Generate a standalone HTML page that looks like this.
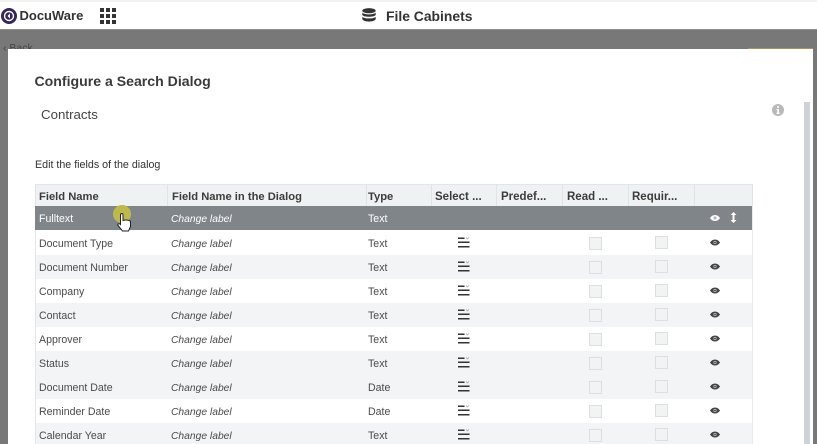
<!DOCTYPE html>
<html><head><meta charset="utf-8"><style>
html,body{margin:0;padding:0;width:817px;height:444px;overflow:hidden}
body{position:relative;background:#fff;font-family:"Liberation Sans",sans-serif;color:#333}
#o{position:absolute;left:0;top:0;width:817px;height:444px;overflow:hidden}
#w{position:absolute;left:0;top:0;width:817px;height:460px;filter:blur(.3px)}
.a{position:absolute;white-space:nowrap}
.h{top:184px;height:22px;line-height:25px;font-size:11.2px;font-weight:bold;border-right:1px solid #dfe4e6;border-top:1px solid #e2e6e8;box-sizing:border-box;padding-left:4px;color:#3c3c3c}
.s{font-size:11.5px}
.r{left:35px;width:717px;height:24px}
.t{font-size:10.6px;line-height:26px;color:#4a4a4a}
.i{font-style:italic;left:171px;font-size:10.3px;line-height:27px}
.n{left:39px}.ty{left:368px}
</style></head><body><div id="o"><div id="w">
<div class="a" style="left:0;top:0;width:817px;height:2px;background:#f1f1f1"></div>
<svg class="a" style="left:1px;top:8px" width="16" height="16" viewBox="0 0 16 16"><circle cx="8" cy="8" r="8" fill="#33265e"/><circle cx="8" cy="8" r="4.500" fill="none" stroke="#fff" stroke-width="1.400"/><path d="M6.500 8l2.500-2.500v5z" fill="#fff"/></svg>
<div class="a" style="left:19.500px;top:8px;font-size:13px;line-height:16px;font-weight:bold;color:#333">DocuWare</div>
<svg class="a" style="left:100px;top:8px" width="16" height="16" fill="#333"><path d="M0 0h4v4H0zM6 0h4v4H6zM12 0h4v4h-4zM0 6h4v4H0zM6 6h4v4H6zM12 6h4v4h-4zM0 12h4v4H0zM6 12h4v4H6zM12 12h4v4h-4z"/></svg>
<svg class="a" style="left:362px;top:8px" width="14" height="14" fill="#333"><ellipse cx="7" cy="2.700" rx="6.700" ry="2.600"/><path d="M.3 4.500C2 7 12 7 13.700 4.500V7C12 9.400 2 9.400.3 7zM.3 8.700C2 11 12 11 13.700 8.700v2.600C12 14.400 2 14.400.3 11.300z"/></svg>
<div class="a" style="left:386px;top:8px;font-size:13.900px;line-height:16px;font-weight:bold;color:#333">File Cabinets</div>
<div class="a" style="left:0;top:29px;width:817px;height:431px;background:#777877"></div>
<div class="a" style="left:0;top:29px;width:817px;height:1px;background:#8e8f8e"></div>
<div class="a" style="left:3px;top:42px;font-size:10.500px;line-height:12px;color:#444">‹ Back</div>
<div class="a" style="left:748px;top:48px;width:65px;height:1px;background:#a8915a"></div>
<div class="a" style="left:8px;top:49px;width:805px;height:411px;background:#fff"></div>
<div class="a" style="left:804px;top:102px;width:6px;height:358px;background:#cdd3d6"></div>
<div class="a" style="left:34.500px;top:73px;font-size:14.100px;line-height:17px;font-weight:bold;color:#3a3a3a">Configure a Search Dialog</div>
<div class="a" style="left:41px;top:106px;font-size:13.300px;line-height:17px;color:#444">Contracts</div>
<div class="a" style="left:35px;top:159px;font-size:10.700px;line-height:13px;color:#333">Edit the fields of the dialog</div>
<svg class="a" style="left:772px;top:104px" width="12" height="12"><circle cx="6" cy="6" r="6" fill="#b9b9b9"/><path d="M5 2.200h2v1.600H5zM4.700 5h2.300v3.600h.6V10H4.500V8.600h.8V6.200h-.6z" fill="#fff"/></svg>

<div class="a" style="left:35px;top:184px;width:718px;height:22px;border-left:1px solid #dfe4e6;box-sizing:border-box;background:#eff2f3"></div>
<div class="a h" style="left:35px;width:133px">Field Name</div>
<div class="a h" style="left:168px;width:199px">Field Name in the Dialog</div>
<div class="a h" style="left:367px;width:65px;padding-left:1px">Type</div>
<div class="a h s" style="left:432px;width:65px;padding-left:3px">Select ...</div>
<div class="a h s" style="left:497px;width:66px">Predef...</div>
<div class="a h s" style="left:563px;width:66px;padding-left:4px">Read ...</div>
<div class="a h s" style="left:629px;width:66px;padding-left:3px">Requir...</div>
<div class="a h" style="left:695px;width:58px"></div>

<div class="a" style="left:35px;top:206px;width:717px;height:24px;background:#808589"></div>
<div class="a t n" style="top:206px;color:#fff">Fulltext</div>
<div class="a t i" style="top:206px;color:#fff">Change label</div>
<div class="a t ty" style="top:206px;color:#fff">Text</div>
<svg class="a" style="left:710px;top:214px" width="10" height="8"><path d="M0 4C2.500 0 7.500 0 10 4 7.500 8 2.500 8 0 4z" fill="#fff"/><circle cx="5" cy="4" r="1.600" fill="#b5b9bb"/></svg>
<svg class="a" style="left:730px;top:212px" width="7" height="11" fill="#fff"><path d="M3.500 0L6.500 3H4.500V8H6.500L3.500 11 .5 8H2.500V3H.5z"/></svg>
<div class="a" style="left:113px;top:205px;width:18px;height:18px;border-radius:50%;background:#bdb94f"></div>
<svg class="a" style="left:117px;top:213px" width="15" height="20"><path d="M3.500 2c0-2 2.500-2 2.500 0v5.500c2-.7 6.500-.7 7.500 1v5l-2 4.500H5.500L1 12.500c-.8-1.500 1-2.500 2.500-1z" fill="#fff" stroke="#222" stroke-width="1"/></svg>

<div class="a r" style="top:255px;background:#f3f4f6"></div>
<div class="a r" style="top:303px;background:#f3f4f6"></div>
<div class="a r" style="top:351px;background:#f3f4f6;height:48px"></div>
<div class="a r" style="top:423px;background:#f3f4f6;height:37px"></div>
<div class="a" style="left:35px;top:230px;width:1px;height:230px;background:#e4e7e9"></div>
<div class="a" style="left:752px;top:206px;width:1px;height:254px;background:#e8ebec"></div>

<div class="a t n" style="top:231px">Document Type</div><div class="a t i" style="top:231px">Change label</div><div class="a t ty" style="top:231px">Text</div>
<div class="a t n" style="top:255px">Document Number</div><div class="a t i" style="top:255px">Change label</div><div class="a t ty" style="top:255px">Text</div>
<div class="a t n" style="top:279px">Company</div><div class="a t i" style="top:279px">Change label</div><div class="a t ty" style="top:279px">Text</div>
<div class="a t n" style="top:303px">Contact</div><div class="a t i" style="top:303px">Change label</div><div class="a t ty" style="top:303px">Text</div>
<div class="a t n" style="top:327px">Approver</div><div class="a t i" style="top:327px">Change label</div><div class="a t ty" style="top:327px">Text</div>
<div class="a t n" style="top:351px">Status</div><div class="a t i" style="top:351px">Change label</div><div class="a t ty" style="top:351px">Text</div>
<div class="a t n" style="top:375px">Document Date</div><div class="a t i" style="top:375px">Change label</div><div class="a t ty" style="top:375px">Date</div>
<div class="a t n" style="top:399px">Reminder Date</div><div class="a t i" style="top:399px">Change label</div><div class="a t ty" style="top:399px">Date</div>
<div class="a t n" style="top:423px">Calendar Year</div><div class="a t i" style="top:423px">Change label</div><div class="a t ty" style="top:423px">Text</div>

<svg class="a" style="left:0;top:0" width="817" height="460">
<defs>
<g id="l"><path d="M458 237.500h6.500v1.500H458zM458 241.500h11.500v1.500H458zM458 246h11.500v1.500H458z" fill="#333"/><path d="M466 237.500l1.500 1.500 1.500-1.500" fill="none" stroke="#999" stroke-width=".7"/></g>
<g id="e"><path d="M710 242.500C712.500 238.500 717.500 238.500 720 242.500 717.500 246.500 712.500 246.500 710 242.500z" fill="#444"/><circle cx="715" cy="242.500" r="1.600" fill="#bbb"/><circle cx="715" cy="242.500" r=".8" fill="#333"/></g>
<g id="c"><rect x="589.500" y="237.500" width="12" height="12" fill="#f2f3f3" stroke="#dcdedf"/><rect x="655.500" y="236.500" width="12" height="12" fill="#f2f3f3" stroke="#dcdedf"/></g>
</defs>
<use href="#l"/><use href="#e"/><use href="#c"/>
<use href="#l" y="24"/><use href="#e" y="24"/><use href="#c" y="24"/>
<use href="#l" y="48"/><use href="#e" y="48"/><use href="#c" y="48"/>
<use href="#l" y="72"/><use href="#e" y="72"/><use href="#c" y="72"/>
<use href="#l" y="96"/><use href="#e" y="96"/><use href="#c" y="96"/>
<use href="#l" y="120"/><use href="#e" y="120"/><use href="#c" y="120"/>
<use href="#l" y="144"/><use href="#e" y="144"/><use href="#c" y="144"/>
<use href="#l" y="168"/><use href="#e" y="168"/><use href="#c" y="168"/>
<use href="#l" y="192"/><use href="#e" y="192"/><use href="#c" y="192"/>
</svg>
</div></div></body></html>
